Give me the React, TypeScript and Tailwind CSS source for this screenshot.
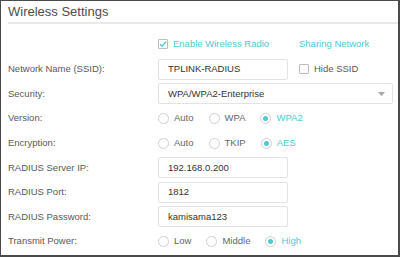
import React from "react";

const font = { fontFamily: '"Liberation Sans", Arial, sans-serif' };

function Check({ checked }: { checked?: boolean }) {
  return (
    <span className="w-[10px] h-[10px] border border-[#bdbdbd] rounded-[1px] bg-white flex items-center justify-center shrink-0">
      {checked && (
        <svg width="8" height="8" viewBox="0 0 8 8">
          <path d="M1 4.2 L3.1 6.2 L7 1.6" fill="none" stroke="#4acbd6" strokeWidth="1.3" />
        </svg>
      )}
    </span>
  );
}

function Radio({ label, checked }: { label: string; checked?: boolean }) {
  return (
    <label className="flex items-center gap-[5px]">
      <span className="w-[11px] h-[11px] rounded-full border border-[#cfcfcf] bg-white flex items-center justify-center shrink-0">
        {checked && <span className="w-[5px] h-[5px] rounded-full bg-[#4acbd6]" />}
      </span>
      <span className={checked ? "text-[#4acbd6]" : "text-[#666]"}>{label}</span>
    </label>
  );
}

function Field({ value }: { value: string }) {
  return (
    <div className="w-[130px] h-[21px] border border-[#e2e2e2] rounded-[2px] pl-[9px] flex items-center text-[#333]">
      {value}
    </div>
  );
}

function Row({ label, children, first }: { label?: string; children: React.ReactNode; first?: boolean }) {
  return (
    <div className={`flex items-center ${first ? "h-[26px]" : "h-[24.6px]"}`}>
      <div className="w-[150px] shrink-0 text-[#595959]">{label}</div>
      <div className="flex items-center flex-1">{children}</div>
    </div>
  );
}

export default function App() {
  return (
    <div
      className="w-[400px] h-[257px] bg-white border-t border-l border-r-2 border-b-2 border-[#4a4a4a] overflow-hidden text-[9.5px]"
      style={font}
    >
      <div className="pl-[7px] h-[21px] flex items-center text-[13px] text-[#4d4d4d]">Wireless Settings</div>
      <div className="ml-[7px] h-[2px] bg-[#e8e8e8]" />
      <div className="pl-[7px] pr-[5px] pt-[7px]">
        <Row first>
          <div className="flex items-center gap-[5px] w-[141px] text-[#4acbd6]">
            <Check checked />
            <span>Enable Wireless Radio</span>
          </div>
          <span className="text-[#4acbd6]">Sharing Network</span>
        </Row>
        <Row label="Network Name (SSID):">
          <Field value="TPLINK-RADIUS" />
          <div className="flex items-center gap-[5px] ml-[11px] text-[#595959]">
            <Check />
            <span>Hide SSID</span>
          </div>
        </Row>
        <Row label="Security:">
          <div className="flex-1 h-[21px] border border-[#e2e2e2] rounded-[2px] pl-[9px] pr-[7px] flex items-center justify-between text-[#333]">
            <span>WPA/WPA2-Enterprise</span>
            <svg width="7" height="4" viewBox="0 0 7 4">
              <path d="M0 0 L7 0 L3.5 4 Z" fill="#a6a6a6" />
            </svg>
          </div>
        </Row>
        <Row label="Version:">
          <div className="flex items-center gap-[15px]">
            <Radio label="Auto" />
            <Radio label="WPA" />
            <Radio label="WPA2" checked />
          </div>
        </Row>
        <Row label="Encryption:">
          <div className="flex items-center gap-[15px]">
            <Radio label="Auto" />
            <Radio label="TKIP" />
            <Radio label="AES" checked />
          </div>
        </Row>
        <Row label="RADIUS Server IP:">
          <Field value="192.168.0.200" />
        </Row>
        <Row label="RADIUS Port:">
          <Field value="1812" />
        </Row>
        <Row label="RADIUS Password:">
          <Field value="kamisama123" />
        </Row>
        <Row label="Transmit Power:">
          <div className="flex items-center gap-[15px]">
            <Radio label="Low" />
            <Radio label="Middle" />
            <Radio label="High" checked />
          </div>
        </Row>
      </div>
    </div>
  );
}
